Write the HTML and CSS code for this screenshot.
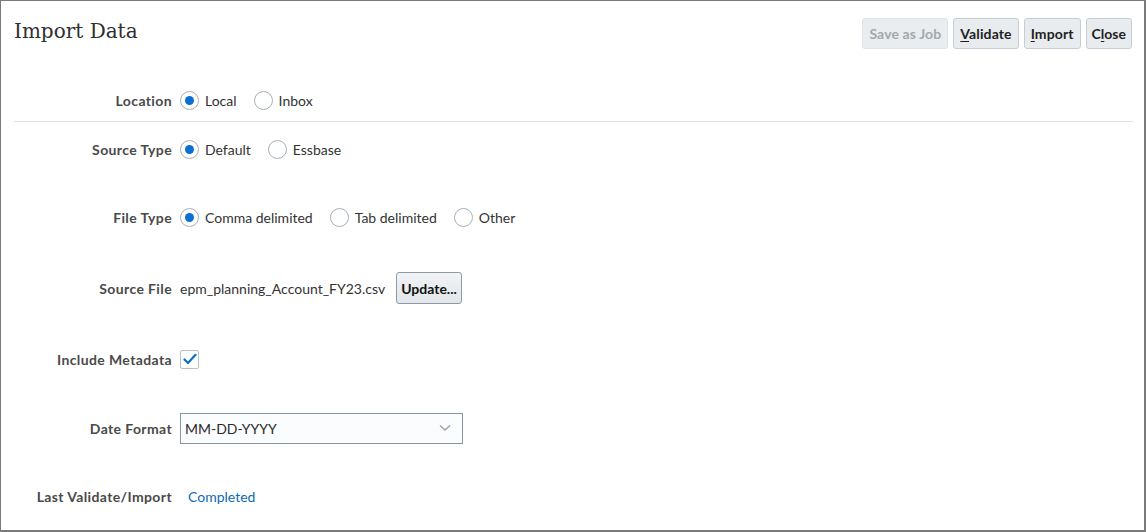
FILE: index.html
```html
<!DOCTYPE html>
<html>
<head>
<meta charset="utf-8">
<link rel="stylesheet" href="styles.css">
</head>
<body>
<div class="frame">
  <div class="header">
    <h1 class="title">Import Data</h1>
    <div class="actions">
      <button class="btn btn-disabled">Save as Job</button>
      <button class="btn"><u>V</u>alidate</button>
      <button class="btn"><u>I</u>mport</button>
      <button class="btn btn-close">C<u>l</u>ose</button>
    </div>
  </div>

  <div class="row row-location">
    <div class="label">Location</div>
    <div class="control">
      <span class="radio checked"></span><span class="opt">Local</span>
      <span class="radio"></span><span class="opt">Inbox</span>
    </div>
  </div>
  <div class="sep"></div>

  <div class="form">
    <div class="row">
      <div class="label">Source Type</div>
      <div class="control">
        <span class="radio checked"></span><span class="opt">Default</span>
        <span class="radio"></span><span class="opt">Essbase</span>
      </div>
    </div>
    <div class="row row-filetype">
      <div class="label">File Type</div>
      <div class="control">
        <span class="radio checked"></span><span class="opt">Comma delimited</span>
        <span class="radio"></span><span class="opt">Tab delimited</span>
        <span class="radio"></span><span class="opt">Other</span>
      </div>
    </div>
    <div class="row row-sourcefile">
      <div class="label">Source File</div>
      <div class="control">
        <span class="filename">epm_planning_Account_FY23.csv</span>
        <button class="btn btn-update">Update...</button>
      </div>
    </div>
    <div class="row row-meta">
      <div class="label">Include Metadata</div>
      <div class="control">
        <span class="checkbox">
          <svg width="14" height="12" viewBox="0 0 14 12"><path d="M1.5 6.5 L5 10 L12.5 1.8" fill="none" stroke="#0a6fc9" stroke-width="2.2" stroke-linecap="round" stroke-linejoin="round"/></svg>
        </span>
      </div>
    </div>
    <div class="row row-date">
      <div class="label">Date Format</div>
      <div class="control">
        <div class="select">
          <span>MM-DD-YYYY</span>
          <svg class="chev" width="12" height="8" viewBox="0 0 12 8"><path d="M1 1.5 L6 6 L11 1.5" fill="none" stroke="#9aa3ab" stroke-width="1.4"/></svg>
        </div>
      </div>
    </div>
    <div class="row row-last">
      <div class="label">Last Validate/Import</div>
      <div class="control">
        <a class="link" href="#">Completed</a>
      </div>
    </div>
  </div>
</div>
</body>
</html>
```

FILE: styles.css
```css
html, body {
  margin: 0;
  padding: 0;
  background: #ffffff;
}
body {
  font-family: Lato, "Noto Sans", "Liberation Sans", sans-serif;
  font-size: 14px;
  color: #333333;
}
.frame {
  box-sizing: border-box;
  width: 1146px;
  height: 532px;
  border: 1px solid #7a7a7a;
  border-width: 1px 2px 2px 1px;
}
.header {
  display: flex;
  justify-content: space-between;
  align-items: flex-start;
  padding: 17px 12px 0 13px;
  height: 66px;
}
.title {
  margin: 0;
  font-family: "DejaVu Serif", "Liberation Serif", serif;
  font-weight: normal;
  font-size: 20px;
  color: #2f2f2f;
  line-height: 26px;
}
.actions {
  display: flex;
  gap: 5px;
}
.btn {
  font-family: inherit;
  font-size: 14px;
  font-weight: bold;
  letter-spacing: 0.12px;
  color: #1f1f1f;
  background: #e8ecef;
  border: 1px solid #c5ced6;
  border-radius: 3px;
  height: 31px;
  padding: 0 6px;
  cursor: pointer;
}
.btn-close {
  padding: 0 5px;
  letter-spacing: 0;
}
.btn u {
  text-decoration: underline;
  text-underline-offset: 2px;
}
.btn-disabled {
  color: #a3a8ac;
  background: #eaedef;
  border-color: #dde3e8;
}
.row {
  display: grid;
  grid-template-columns: 171px 1fr;
  column-gap: 8px;
  align-items: center;
  height: 32px;
}
.label {
  text-align: right;
  font-weight: bold;
  letter-spacing: 0.38px;
  color: #4a4a4a;
}
.control {
  display: flex;
  align-items: center;
}
.radio {
  box-sizing: border-box;
  width: 19px;
  height: 19px;
  border: 1px solid #a6b0b8;
  border-radius: 50%;
  display: inline-flex;
  align-items: center;
  justify-content: center;
  background: #ffffff;
  flex: none;
}
.radio.checked::after {
  content: "";
  width: 9px;
  height: 9px;
  border-radius: 50%;
  background: #0a6fd0;
}
.opt {
  margin-left: 6px;
  margin-right: 17px;
  color: #333333;
}
.sep {
  height: 1px;
  background: #dbe3e9;
  margin: 5px 11px 11px 13px;
}
.form {
  display: flex;
  flex-direction: column;
}
.row-filetype { margin-top: 36px; }
.row-sourcefile { margin-top: 39px; }
.row-meta { margin-top: 39px; }
.row-date { margin-top: 37px; }
.row-last { margin-top: 36px; }
.filename {
  color: #333333;
  margin-right: 11px;
}
.btn-update {
  height: 32px;
  padding: 0 4px;
  letter-spacing: 0;
  color: #111111;
  background: linear-gradient(#f1f3f5, #e2e6ea);
  border: 1px solid #8e9aa4;
  border-radius: 3px;
}
.checkbox {
  box-sizing: border-box;
  width: 19px;
  height: 19px;
  border: 1px solid #b8c1c8;
  border-radius: 2px;
  display: inline-flex;
  align-items: center;
  justify-content: center;
  background: #ffffff;
}
.select {
  box-sizing: border-box;
  width: 283px;
  height: 31px;
  border: 1px solid #8796a2;
  background: #fbfcfd;
  display: flex;
  align-items: center;
  justify-content: space-between;
  padding: 0 11px 0 4px;
  color: #2b2b2b;
}
.link {
  color: #1069b3;
  text-decoration: none;
  margin-left: 8px;
}
```
